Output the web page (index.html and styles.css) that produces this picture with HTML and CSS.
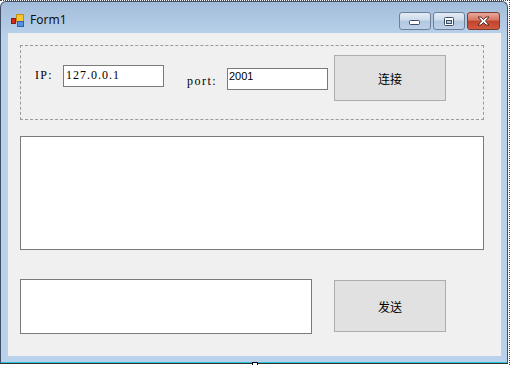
FILE: index.html
```html
<!DOCTYPE html>
<html lang="en">

<head>
  <meta charset="UTF-8">
  <meta name="viewport" content="width=device-width, initial-scale=1.0">
  <title>Form1</title>
  <link rel="stylesheet" href="styles.css">
</head>

<body>
  <div class="screen">
    <div class="window">
      <div class="titlebar">
        <svg class="app-icon" width="14" height="13" viewBox="0 0 14 13">
          <rect x="0.5" y="4.5" width="4" height="5" fill="#d8261c" stroke="#8c1a14"/>
          <rect x="5.5" y="0.5" width="7" height="7" fill="#f7c531" stroke="#c78a12"/>
          <rect x="6.5" y="7.5" width="6" height="5" fill="#5a8fe0" stroke="#2f5fae"/>
        </svg>
        <span class="title">Form1</span>
        <div class="caption-buttons">
          <span class="cap cap-min">
            <svg width="32" height="18" viewBox="0 0 32 18">
              <rect x="10.5" y="8.5" width="10" height="4" rx="1" fill="#fff" stroke="#3c4d66"/>
            </svg>
          </span>
          <span class="cap cap-max">
            <svg width="32" height="18" viewBox="0 0 32 18">
              <rect x="11.5" y="5.5" width="9" height="8" rx="1" fill="#fff" stroke="#3c4d66"/>
              <rect x="13.5" y="8.5" width="5" height="3" fill="#b7cbe2" stroke="#3c4d66"/>
            </svg>
          </span>
          <span class="cap cap-close">
            <svg width="33" height="18" viewBox="0 0 33 18">
              <path d="M11 5 L14 5 L16.5 7.5 L19 5 L22 5 L18.5 9 L22 13 L19 13 L16.5 10.5 L14 13 L11 13 L14.5 9 Z" fill="#fff" stroke="#5a2a24" stroke-width="1"/>
            </svg>
          </span>
        </div>
      </div>

      <div class="client">
        <div class="group">
          <span class="lbl lbl-ip">IP:</span>
          <div class="textbox tb-ip">127.0.0.1</div>
          <span class="lbl lbl-port">port:</span>
          <div class="textbox tb-port">2001</div>
          <button class="btn btn-connect">连接</button>
        </div>

        <div class="textbox log"></div>

        <div class="send-row">
          <div class="textbox msg"></div>
          <button class="btn btn-send">发送</button>
        </div>
      </div>
    </div>
    <span class="grip"></span>
  </div>
</body>

</html>
```

FILE: styles.css
```css
html,
body {
  margin: 0;
  background: #fff;
}

.screen {
  position: relative;
  width: 509px;
  height: 364px;
  border-top: 1px dotted #444;
  border-right: 1px dotted #444;
}

.window {
  width: 508px;
  box-sizing: border-box;
  border: 1px solid #3f4f66;
  border-bottom: 1px solid #27c4d8;
  border-radius: 6px 6px 0 0;
  box-shadow: 0 1px 0 #333;
  background: linear-gradient(#a3bcd9, #b9d1ea 34px, #b9d1ea);
}

.titlebar {
  display: flex;
  align-items: flex-start;
  height: 31px;
  padding: 0 7px 0 10px;
}

.app-icon {
  margin-top: 12px;
  display: block;
}

.title {
  margin: 10px 0 0 5px;
  font-family: "Noto Sans", sans-serif;
  font-size: 12px;
  line-height: 16px;
  color: #111;
}

.caption-buttons {
  display: flex;
  gap: 2px;
  margin: 10px 0 0 auto;
}

.cap {
  display: block;
  height: 18px;
  box-sizing: border-box;
  border: 1px solid #6d7e98;
  border-radius: 3px;
  background: linear-gradient(#e4ecf6, #ccdaeb 45%, #b2c7e0 50%, #bcd0e8);
  overflow: hidden;
}

.cap svg {
  display: block;
  margin: -1px;
}

.cap-min,
.cap-max {
  width: 32px;
}

.cap-close {
  width: 33px;
  border-color: #7d3a31;
  background: linear-gradient(#eaa99a, #d67560 45%, #c2432d 50%, #cf5a40);
}

.client {
  margin: 0 6px 6px 7px;
  height: 323px;
  background: #f0f0f0;
  overflow: hidden;
}

.group {
  display: flex;
  align-items: flex-start;
  box-sizing: border-box;
  width: 464px;
  height: 75px;
  margin: 12px 0 0 12px;
  padding-left: 14px;
  border: 1px dashed #9a9a9a;
}

.lbl {
  flex: none;
  font-family: "Liberation Serif", serif;
  font-size: 12px;
  line-height: 14px;
  white-space: nowrap;
  color: #000;
}

.lbl-ip {
  width: 18px;
  margin-top: 22px;
  letter-spacing: 1.3px;
}

.lbl-port {
  width: 30px;
  margin: 28px 0 0 23px;
  letter-spacing: 1.5px;
}

.textbox {
  flex: none;
  box-sizing: border-box;
  border: 1px solid #7a7a7a;
  background: #fff;
  color: #000;
}

.tb-ip {
  width: 101px;
  height: 22px;
  margin: 19px 0 0 10px;
  padding-left: 2px;
  font-family: "Liberation Serif", serif;
  font-size: 12px;
  letter-spacing: 1px;
  line-height: 18px;
}

.tb-port {
  width: 101px;
  height: 22px;
  margin: 22px 0 0 10px;
  padding: 1px 0 0 1px;
  font-family: "Liberation Sans", sans-serif;
  font-size: 11px;
  line-height: 13px;
}

.btn {
  flex: none;
  box-sizing: border-box;
  width: 112px;
  padding: 0;
  border: 1px solid #adadad;
  background: #e1e1e1;
  font-family: "Noto Sans CJK SC", sans-serif;
  font-size: 12px;
  color: #000;
}

.btn-connect {
  height: 46px;
  margin: 9px 0 0 6px;
}

.log {
  width: 464px;
  height: 114px;
  margin: 16px 0 0 12px;
}

.send-row {
  display: flex;
  align-items: flex-start;
  margin: 29px 0 0 12px;
}

.msg {
  width: 292px;
  height: 55px;
}

.btn-send {
  height: 52px;
  margin: 1px 0 0 22px;
}

.grip {
  position: absolute;
  left: 252px;
  top: 361px;
  width: 4px;
  height: 4px;
  border: 1px solid #000;
  background: #fff;
}
```
